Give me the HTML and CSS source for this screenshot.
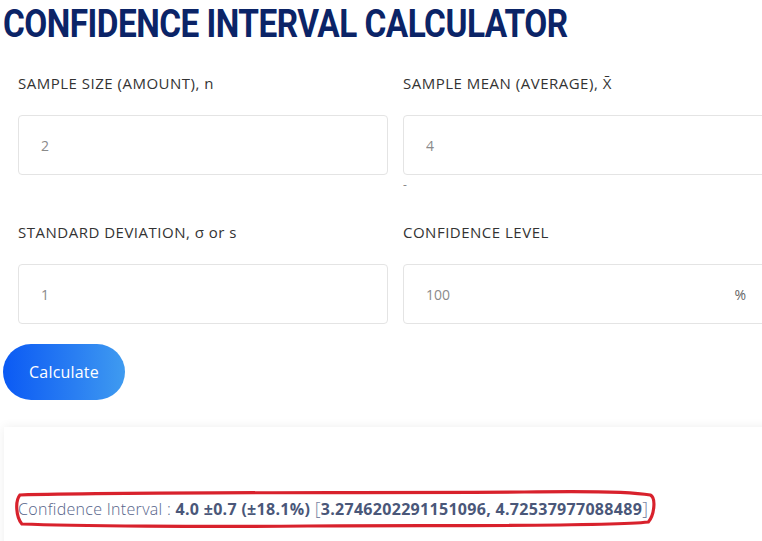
FILE: index.html
```html
<!DOCTYPE html>
<html>
<head>
<meta charset="utf-8">
<link rel="stylesheet" href="styles.css">
</head>
<body>
<div class="page">
  <h1 class="title">CONFIDENCE INTERVAL CALCULATOR</h1>
  <div class="form">
    <div class="grid">
      <div class="field">
        <label class="label">SAMPLE SIZE (AMOUNT), n</label>
        <div class="box"><input class="inp" type="text" placeholder="2"></div>
      </div>
      <div class="field">
        <label class="label">SAMPLE MEAN (AVERAGE), X&#772;</label>
        <div class="box"><input class="inp" type="text" placeholder="4"></div>
        <div class="hint">-</div>
      </div>
      <div class="field">
        <label class="label">STANDARD DEVIATION, σ or s</label>
        <div class="box"><input class="inp" type="text" placeholder="1"></div>
      </div>
      <div class="field">
        <label class="label">CONFIDENCE LEVEL</label>
        <div class="box"><input class="inp" type="text" placeholder="100"><span class="unit">%</span></div>
      </div>
    </div>
  </div>
  <button class="btn">Calculate</button>
  <div class="card">
    <div class="result">
      <span class="lt">Confidence Interval : </span><b>4.0 ±0.7 (±18.1%)</b> <span class="lt br">[</span><b>3.2746202291151096, 4.72537977088489</b><span class="lt br">]</span>
      <svg class="circle" viewBox="0 0 660 40" preserveAspectRatio="none"><path d="M8 6 C120 3 300 4 520 3 C580 2 630 3 648 6 C654 9 652 26 646 33 C600 38 420 36 300 37 C200 38 60 37 10 35 C4 28 3 12 8 6 Z" fill="none" stroke="#d8212c" stroke-width="3.2"/></svg>
    </div>
  </div>
</div>
</body>
</html>
```

FILE: styles.css
```css
html, body {
  margin: 0;
  padding: 0;
  background: #ffffff;
  overflow: hidden;
}
body {
  width: 762px;
  height: 541px;
  font-family: "Open Sans", "Lato", sans-serif;
  color: #333;
}
.page {
  width: 800px;
}
.title {
  margin: 0 0 0 3px;
  padding-top: 1px;
  font-family: Roboto, "Liberation Sans", sans-serif;
  font-weight: 700;
  font-size: 38px;
  line-height: 46px;
  color: #0b2467;
  letter-spacing: -0.6px;
  transform: scaleX(0.878);
  transform-origin: left center;
  white-space: nowrap;
}
.form {
  padding-left: 18px;
  margin-top: 25px;
}
.grid {
  display: grid;
  grid-template-columns: 370px 370px;
  grid-template-rows: 149px auto;
  column-gap: 15px;
}
.field {
  display: flex;
  flex-direction: column;
}
.label {
  font-size: 15px;
  letter-spacing: 0.5px;
  line-height: 22px;
  color: #333;
  margin-bottom: 21px;
}
.box {
  display: flex;
  align-items: center;
  height: 58px;
  border: 1px solid #e4e4e4;
  border-radius: 4px;
  background: #fff;
}
.inp {
  flex: 1;
  border: none;
  outline: none;
  background: transparent;
  padding: 0 0 0 22px;
  font-family: "Open Sans", sans-serif;
  font-size: 14px;
  color: #888;
  min-width: 0;
}
.inp::placeholder {
  color: #8a8a8a;
}
.unit {
  font-size: 14px;
  color: #666;
  margin-right: 26px;
}
.hint {
  font-size: 12px;
  line-height: 16px;
  color: #888;
  margin-top: 2px;
}
.btn {
  display: block;
  margin: 20px 0 0 3px;
  width: 122px;
  height: 56px;
  border: none;
  border-radius: 28px;
  background: linear-gradient(90deg, #0b5af4 0%, #2a7ff2 60%, #3f9bf0 100%);
  color: #fff;
  font-family: "Open Sans", sans-serif;
  font-size: 16px;
  font-weight: 500;
  letter-spacing: 0.2px;
}
.card {
  margin: 27px 0 0 4px;
  height: 200px;
  background: #fff;
  box-shadow: 0 0 10px rgba(0, 0, 0, 0.07);
  padding: 70px 0 0 14px;
  box-sizing: border-box;
}
.result {
  position: relative;
  display: inline-block;
  font-family: "Open Sans", sans-serif;
  font-size: 16px;
  letter-spacing: 0.3px;
  line-height: 22px;
  color: #56648a;
  white-space: nowrap;
}
.result b {
  font-weight: 700;
  color: #4a5779;
}
.lt {
  font-weight: 300;
}
.br {
  font-size: 18px;
  color: #7a85a3;
}
.circle {
  position: absolute;
  left: -6px;
  top: -8px;
  width: calc(100% + 20px);
  height: 40px;
  overflow: visible;
}
```
